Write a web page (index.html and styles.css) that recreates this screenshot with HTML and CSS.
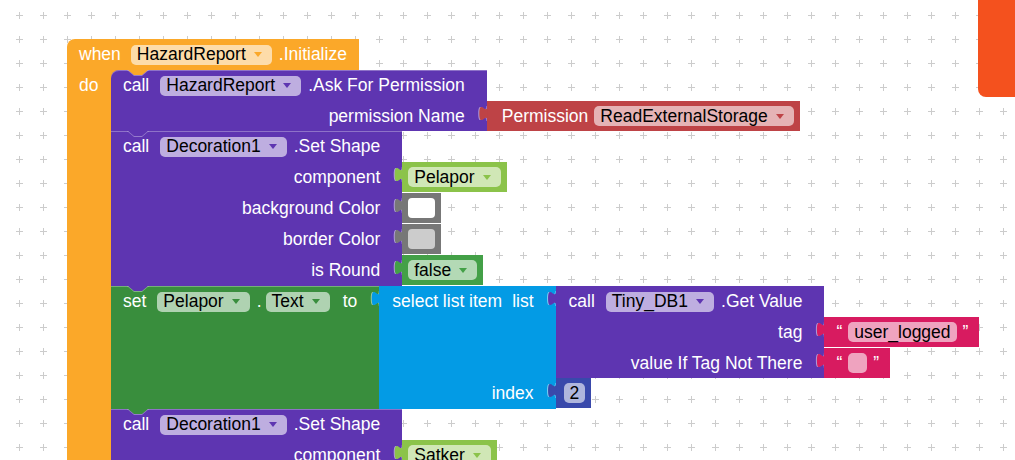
FILE: index.html
```html
<!DOCTYPE html>
<html lang="en">
<head>
    <meta charset="UTF-8">
    <meta name="viewport" content="width=device-width, initial-scale=1.0">
    <title>Blocks - HazardReport</title>
    <link rel="stylesheet" href="styles.css">
</head>
<body>
<div class="workspace">
    <svg class="grid" width="1015" height="460">
        <defs>
            <pattern id="plus" width="24" height="24" x="7" y="3" patternUnits="userSpaceOnUse">
                <path d="M9 12.5H16M12.5 9V16" stroke="#cccccc" stroke-width="1"/>
            </pattern>
        </defs>
        <rect width="100%" height="100%" fill="url(#plus)"/>
    </svg>

    <div class="canvas">
        <div class="event orange">
            <div class="event-head">
                <div class="line"><span>when</span><span class="dd">HazardReport</span><span>.Initialize</span></div>
            </div>
            <div class="event-body">
                <div class="do"><div class="line">do</div></div>
                <div class="stack">

                    <!-- HazardReport.AskForPermission -->
                    <div class="blk stmt purple first under-orange">
                        <div class="lbl head"><div class="line"><span>call</span><span class="dd">HazardReport</span><span>.Ask For Permission</span></div></div>
                        <div></div>
                        <div class="lbl"><div class="line short">permission Name</div></div>
                        <div class="val">
                            <div class="vb simple red">
                                <span class="vlabel">Permission</span><span class="dd solo">ReadExternalStorage</span>
                            </div>
                        </div>
                    </div>

                    <!-- Decoration1.SetShape -->
                    <div class="blk stmt purple under-purple">
                        <div class="lbl head"><div class="line"><span>call</span><span class="dd">Decoration1</span><span>.Set Shape</span></div></div>
                        <div></div>
                        <div class="lbl"><div class="line">component</div></div>
                        <div class="val"><div class="vb simple lime"><span class="dd solo">Pelapor</span></div></div>
                        <div class="lbl"><div class="line">background Color</div></div>
                        <div class="val"><div class="vb simple grey"><span class="swatch white"></span></div></div>
                        <div class="lbl"><div class="line">border Color</div></div>
                        <div class="val"><div class="vb simple grey"><span class="swatch light"></span></div></div>
                        <div class="lbl"><div class="line">is Round</div></div>
                        <div class="val"><div class="vb simple logic"><span class="dd solo">false</span></div></div>
                    </div>

                    <!-- set Pelapor.Text -->
                    <div class="blk stmt green under-purple">
                        <div class="lbl head"><div class="line"><span>set</span><span class="dd">Pelapor</span><span class="dot">.</span><span class="dd">Text</span><span class="to">to</span></div></div>
                        <div class="val">
                            <div class="blk vb blue">
                                <div class="lbl"><div class="line"><span>select list item</span><span class="gap">list</span></div></div>
                                <div class="val">
                                    <div class="blk vb purple">
                                        <div class="lbl head"><div class="line"><span>call</span><span class="dd">Tiny_DB1</span><span>.Get Value</span></div></div>
                                        <div></div>
                                        <div class="lbl"><div class="line">tag</div></div>
                                        <div class="val">
                                            <div class="vb simple pink txt"><span class="q">“</span><span class="field">user_logged</span><span class="q">”</span></div>
                                        </div>
                                        <div class="lbl"><div class="line short">value If Tag Not There</div></div>
                                        <div class="val">
                                            <div class="vb simple pink txt"><span class="q">“</span><span class="field empty"></span><span class="q">”</span></div>
                                        </div>
                                    </div>
                                </div>
                                <div class="lbl"><div class="line">index</div></div>
                                <div class="val">
                                    <div class="vb simple indigo num"><span class="field">2</span></div>
                                </div>
                            </div>
                        </div>
                    </div>

                    <!-- Decoration1.SetShape -->
                    <div class="blk stmt purple under-green">
                        <div class="lbl head"><div class="line"><span>call</span><span class="dd">Decoration1</span><span>.Set Shape</span></div></div>
                        <div></div>
                        <div class="lbl"><div class="line">component</div></div>
                        <div class="val"><div class="vb simple lime"><span class="dd solo">Satker</span></div></div>
                        <div class="lbl"><div class="line">background Color</div></div>
                        <div class="val"><div class="vb simple grey"><span class="swatch white"></span></div></div>
                        <div class="lbl"><div class="line">border Color</div></div>
                        <div class="val"><div class="vb simple grey"><span class="swatch light"></span></div></div>
                        <div class="lbl"><div class="line">is Round</div></div>
                        <div class="val"><div class="vb simple logic"><span class="dd solo">false</span></div></div>
                    </div>

                </div>
            </div>
        </div>
    </div>

    <div class="corner"></div>
</div>
</body>
</html>
```

FILE: styles.css
```css
body {
    margin: 0;
    font-family: 'Liberation Sans', Arial, sans-serif;
    font-size: 17.5px;
    color: #fff;
    background-color: #fff;
}

/* workspace: grid dots, blocks and the corner tab share one cell */
.workspace {
    display: grid;
    width: 1015px;
    height: 460px;
    overflow: hidden;
}

.workspace > * {
    grid-area: 1 / 1;
}

.grid {
    display: block;
}

.canvas {
    align-self: start;
    justify-self: start;
    padding: 39px 0 0 67px;
}

.corner {
    justify-self: end;
    align-self: start;
    width: 37px;
    height: 97px;
    background-color: #f4511e;
    border-bottom-left-radius: 8px;
}

/* block colours */
.orange { --c: #fba829; }
.purple { --c: #5e35b1; }
.red { --c: #be4346; }
.lime { --c: #8bc34a; }
.grey { --c: #777777; }
.green { --c: #398e3d; }
.logic { --c: #43a047; }
.blue { --c: #039be5; }
.pink { --c: #d81b60; }
.indigo { --c: #3949ab; }

.under-orange { --above: #fba829; }
.under-purple { --above: #5e35b1; }
.under-green { --above: #398e3d; }

/* event block */
.event {
    display: flex;
    flex-direction: column;
    align-items: flex-start;
}

.event-head {
    background-color: var(--c);
    border-top-left-radius: 8px;
    padding: 0 12px;
}

.event-head .dd {
    margin-left: 10px;
}

.event-body {
    display: flex;
    background: linear-gradient(var(--c), var(--c)) 44px 0 / 8px 8px no-repeat;
}

.do {
    width: 44px;
    box-sizing: border-box;
    padding-left: 12px;
    background-color: var(--c);
}

.stack {
    display: flex;
    flex-direction: column;
    align-items: flex-start;
}

.line {
    display: flex;
    align-items: center;
    height: 31px;
    white-space: nowrap;
}

.line.short {
    height: 30px;
}

/* blocks with input rows */
.blk {
    display: grid;
    grid-template-columns: auto auto;
    justify-content: start;
    position: relative;
}

.lbl {
    display: flex;
    justify-content: flex-end;
    align-items: flex-start;
    padding: 0 22px 0 12px;
    background-color: var(--c);
}

.vb > .lbl {
    padding-left: 13px;
}

.lbl.head {
    justify-content: flex-start;
}

.stmt > .head {
    box-shadow: inset 0 1px 0 rgba(255, 255, 255, 0.3);
}

.first > .head {
    border-top-left-radius: 8px;
}

.val {
    display: flex;
    align-items: flex-start;
}

/* notch at the top of a statement */
.stmt::before,
.stmt::after {
    content: '';
    position: absolute;
    top: 0;
}

.stmt::before {
    left: 16px;
    width: 22px;
    height: 6px;
    background-color: rgba(255, 255, 255, 0.35);
    clip-path: polygon(0 0, 100% 0, 68% 100%, 32% 100%);
}

.stmt::after {
    left: 17px;
    width: 20px;
    height: 5px;
    background-color: var(--above);
    clip-path: polygon(0 0, 100% 0, 70% 100%, 30% 100%);
}

/* value blocks with the output tab */
.vb {
    position: relative;
}

.vb::before,
.vb::after {
    content: '';
    position: absolute;
    top: 5px;
    width: 9px;
    height: 15px;
    clip-path: path('M9 0H8.5C8.5 10 0.5 -8 0.5 7.5S8.5 5 8.5 15H9Z');
}

.vb::before {
    left: -9px;
    background-color: rgba(255, 255, 255, 0.5);
}

.vb::after {
    left: -8px;
    background-color: var(--c);
}

.simple {
    display: flex;
    align-items: center;
    height: 30px;
    padding: 0 6px;
    background-color: var(--c);
}

.vlabel {
    margin: 0 6px 0 9px;
}

/* fields */
.dd {
    display: flex;
    align-items: center;
    height: 20px;
    padding: 0 10px 0 6px;
    margin: 0 7px 0 11px;
    border-radius: 5px;
    background-color: rgba(255, 255, 255, 0.6);
    color: #000;
}

.dd::after {
    content: '';
    margin-left: 8px;
    border-left: 4px solid transparent;
    border-right: 4px solid transparent;
    border-top: 5px solid var(--c);
}

.dd.solo {
    margin: 0;
}

.dot + .dd {
    margin-left: 4px;
}

.to {
    margin-left: 6px;
}

.gap {
    margin-left: 10px;
}

.field {
    display: flex;
    align-items: center;
    height: 20px;
    padding: 0 6px;
    border-radius: 5px;
    background-color: rgba(255, 255, 255, 0.6);
    color: #000;
}

.field.empty {
    width: 19px;
    padding: 0;
}

.txt {
    padding: 0 11px 0 12px;
}

.txt .field {
    margin: 0 6px;
}

.num {
    padding: 0 6px 0 8px;
}

.swatch {
    width: 27px;
    height: 20px;
    border-radius: 4px;
}

.swatch.white {
    background-color: #fff;
}

.swatch.light {
    background-color: #cccccc;
}
```
